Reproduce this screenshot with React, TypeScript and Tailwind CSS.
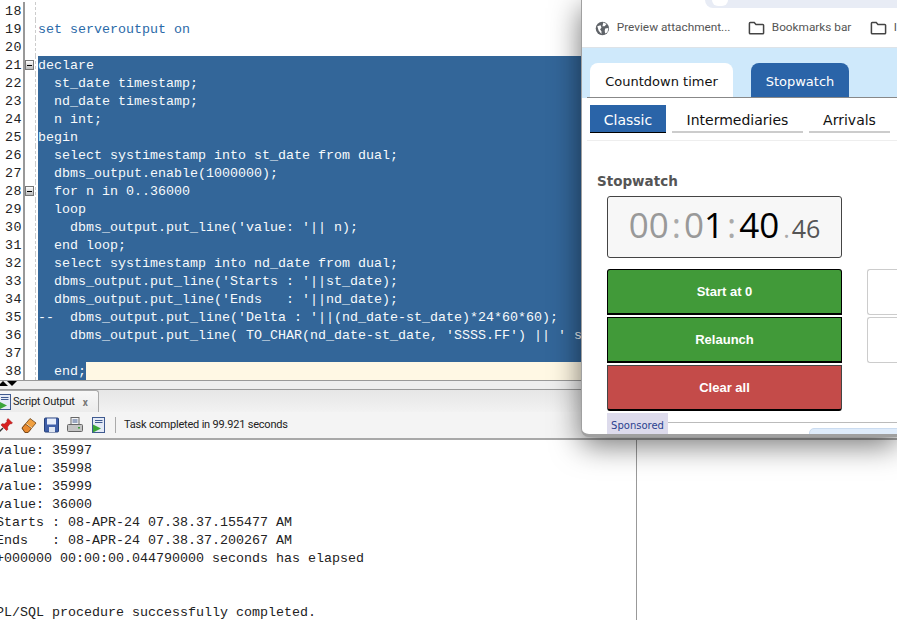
import React from 'react';

const mono = 'font-["Liberation_Mono",monospace]';

const editorLines: [number, string][] = [
  [18, ''],
  [19, 'set serveroutput on'],
  [20, ''],
  [21, 'declare'],
  [22, '  st_date timestamp;'],
  [23, '  nd_date timestamp;'],
  [24, '  n int;'],
  [25, 'begin'],
  [26, '  select systimestamp into st_date from dual;'],
  [27, '  dbms_output.enable(1000000);'],
  [28, '  for n in 0..36000'],
  [29, '  loop'],
  [30, "    dbms_output.put_line('value: '|| n);"],
  [31, '  end loop;'],
  [32, '  select systimestamp into nd_date from dual;'],
  [33, "  dbms_output.put_line('Starts : '||st_date);"],
  [34, "  dbms_output.put_line('Ends   : '||nd_date);"],
  [35, "--  dbms_output.put_line('Delta : '||(nd_date-st_date)*24*60*60);"],
  [36, "    dbms_output.put_line( TO_CHAR(nd_date-st_date, 'SSSS.FF') || ' s"],
  [37, ''],
  [38, '  end;'],
];

const outputLines = [
  'value: 35997',
  'value: 35998',
  'value: 35999',
  'value: 36000',
  'Starts : 08-APR-24 07.38.37.155477 AM',
  'Ends   : 08-APR-24 07.38.37.200267 AM',
  '+000000 00:00:00.044790000 seconds has elapsed',
  '',
  '',
  'PL/SQL procedure successfully completed.',
];

function FoldBox() {
  return (
    <div className="flex h-[10px] w-[9px] items-center justify-center border border-[#777] bg-gradient-to-b from-white to-[#bbb]">
      <div className="h-px w-[5px] bg-black" />
    </div>
  );
}

function EditorRow({ num, text }: { num: number; text: string }) {
  const selected = num >= 21;
  const last = num === 38;
  return (
    <div className="flex h-[18px]">
      <div className={`w-[23px] pl-[5px] pt-px text-[13.33px] leading-[17px] tracking-[0.6px] text-[#222] ${mono}`}>{num}</div>
      <div className="flex w-[12px] items-center justify-end border-l-2 border-[#999] pr-px">
        {(num === 21 || num === 28) && <FoldBox />}
      </div>
      <div className="w-[3px] border-l border-dashed border-[#ccc]" />
      <div className={`min-w-0 flex-1 overflow-hidden ${last ? 'bg-[#fff8e4]' : selected ? 'bg-[#336699]' : ''}`}>
        <div
          className={`h-[18px] whitespace-pre pt-px text-[13.33px] leading-[17px] ${mono} ${
            selected ? 'text-[#f7fafc]' : 'text-[#2a6aa8]'
          } ${last ? 'w-[48px] bg-[#336699]' : ''}`}
        >
          {text}
        </div>
      </div>
    </div>
  );
}

function Folder({ className }: { className: string }) {
  return (
    <svg viewBox="0 0 18 14" className={className} fill="none" stroke="#444" strokeWidth="1.6">
      <path d="M1.5 12.2V2.2c0-.5.4-.9.9-.9h4.2l1.8 2h7.2c.5 0 .9.4.9.9v8c0 .5-.4.9-.9.9H2.4c-.5 0-.9-.4-.9-.9z" />
    </svg>
  );
}

function Globe() {
  return (
    <svg viewBox="0 0 16 16" className="h-[15px] w-[15px]">
      <circle cx="8" cy="8" r="7.2" fill="#5f6368" />
      <path d="M2.5 5.5 6 4.5l1 2.5-1.5 2 1.5 2v3L4 10.5zM9 1.5l3.5 1.5-2 2.5H8zM11 8l3.5-.5-1 4.5-2.5 1.5-.5-3z" fill="#fff" />
    </svg>
  );
}

function RunDoc({ className }: { className: string }) {
  return (
    <svg viewBox="0 0 16 16" className={className}>
      <rect x="2.500" y=".5" width="12" height="15" fill="#e4eaf6" stroke="#3f5a90" />
      <path d="M5 3.500h7.500M5 5.500h7.500" stroke="#3f5a90" />
      <path d="M3 7.500l8 4-8 4z" fill="#3aa53a" />
    </svg>
  );
}

function ToolbarIcons() {
  return (
    <div className="-ml-[2px] flex items-center gap-[7px]">
      <svg viewBox="0 0 16 16" className="h-[16px] w-[16px]">
        <path d="M10 1.500l4.500 4.500-1.500 1-1-.3L9.500 10l.3 2.500-1.300 1L3 8l1-1.300 2.500.3L9 4.500l-.2-1.200z" fill="#d82020" stroke="#9a1010" strokeWidth=".5" />
        <path d="M5 11l-4 4" stroke="#333" strokeWidth="1.500" />
      </svg>
      <svg viewBox="0 0 16 16" className="h-[16px] w-[16px]">
        <path d="M1 11l8-9.500 6 4.500-8 9.500H4z" fill="#f0a040" stroke="#6a4015" strokeWidth=".8" />
        <path d="M5 7l6 4.500" stroke="#fff3dc" strokeWidth="1.200" />
        <path d="M1 11l3.500-4 6 4.500L7 15.500H4z" fill="#e88a30" stroke="#6a4015" strokeWidth=".8" />
      </svg>
      <svg viewBox="0 0 16 16" className="h-[16px] w-[16px]">
        <rect x=".5" y="1" width="14" height="14" rx="1" fill="#3f5fa8" stroke="#26407a" />
        <rect x="3" y="1.500" width="9" height="6" fill="#e8eefb" />
        <rect x="5" y="10" width="6" height="5" fill="#dfe6f2" />
      </svg>
      <svg viewBox="0 0 16 16" className="h-[16px] w-[16px]">
        <rect x="4" y=".5" width="8" height="7" fill="#f4f4f4" stroke="#666" />
        <path d="M5.500 3h5M5.500 5h5" stroke="#3f5a90" />
        <rect x=".5" y="7.500" width="15" height="7" rx="1" fill="#c4c4c4" stroke="#666" />
        <rect x="11" y="10" width="2" height="1.500" fill="#3b9a3b" />
      </svg>
      <RunDoc className="h-[16px] w-[16px]" />
    </div>
  );
}

function BrowserWindow() {
  return (
    <div className="absolute left-[581px] top-0 h-[437px] w-[316px] overflow-hidden rounded-bl-[8px] border-b-[3px] border-l border-[#a0a0a0] bg-white shadow-[0_8px_30px_rgba(0,0,0,0.55)]">
      <div className="relative h-[48px] border-b border-[#dde3e8] font-['Roboto',sans-serif] text-[11.8px] text-[#555]">
        <div className="absolute left-[123px] top-0 h-[8px] w-[200px] rounded-bl-[10px] bg-[#e8ecf5]">
          <div className="ml-[7px] h-[6px] w-[16px] rounded-b-full bg-white" />
        </div>
        <div className="flex h-full items-center pl-[13px] pt-[9px]">
          <Globe />
          <span className="ml-[7px] w-[131px] shrink-0 whitespace-nowrap">Preview attachment...</span>
          <Folder className="h-[14px] w-[17px] shrink-0" />
          <span className="ml-[7px] w-[98px] shrink-0 whitespace-nowrap">Bookmarks bar</span>
          <Folder className="h-[14px] w-[17px] shrink-0" />
          <span className="ml-[7px] whitespace-nowrap">I</span>
        </div>
      </div>
      <div className="h-[50px] bg-[#cfe9fb] font-['DejaVu_Sans',sans-serif] text-[13px]">
        <div className="ml-[5px] flex h-[50px] items-end gap-[18px] border-b border-[#888] pl-[3px]">
          <div className="flex h-[34px] w-[143px] shrink-0 items-center justify-center rounded-t-[8px] bg-white pt-[3px] text-[#111]">Countdown timer</div>
          <div className="flex h-[34px] w-[98px] shrink-0 items-center justify-center rounded-t-[8px] bg-[#2a64a8] pt-[3px] text-white">Stopwatch</div>
        </div>
      </div>
      <div className="ml-[5px] flex h-[43px] gap-[6px] border-b border-[#eee] pl-[3px] pt-[7px] font-['DejaVu_Sans',sans-serif] text-[14px] text-[#111]">
        <div className="flex h-[28px] w-[76px] shrink-0 items-center justify-center border-b border-black bg-[#2a64a8] pt-[4px] text-white">Classic</div>
        <div className="flex h-[28px] w-[131px] shrink-0 items-center justify-center border-b-2 border-[#ccc] pt-[5px]">Intermediaries</div>
        <div className="flex h-[28px] w-[81px] shrink-0 items-center justify-center border-b-2 border-[#ccc] pt-[5px]">Arrivals</div>
      </div>
      <div className="pl-[15px] pt-[31px] font-['DejaVu_Sans',sans-serif] text-[13.5px] font-bold leading-[18px] text-[#555]">Stopwatch</div>
      <div className="flex pl-[25px] pt-[6px]">
        <div className="w-[235px] shrink-0">
          <div className="flex h-[62px] items-baseline justify-center whitespace-pre rounded-[3px] border border-[#444] bg-[#f7f7f7] pt-[7px] font-['Open_Sans',sans-serif] text-[35px] leading-[42px] text-[#999]">
            <span>00</span>
            <span className="mx-[3px] text-[#aaa]">:</span>
            <span>0</span>
            <span className="text-black">1</span>
            <span className="mx-[3px] text-[#aaa]">:</span>
            <span className="text-black">40</span>
            <span className="ml-[4px] text-[25px] text-[#aaa]">.</span>
            <span className="ml-[2px] text-[25px] text-[#555]">46</span>
          </div>
          <div className="mt-[11px] flex flex-col gap-[2px] font-['Liberation_Sans',sans-serif] text-[13px] font-bold text-white">
            <div className="flex h-[46px] items-center justify-center rounded-t-[3px] border border-b-2 border-black bg-[#419a39] pt-px">Start at 0</div>
            <div className="flex h-[46px] items-center justify-center border border-b-2 border-black bg-[#419a39] pt-px">Relaunch</div>
            <div className="flex h-[46px] items-center justify-center rounded-b-[3px] border border-b-2 border-[#444] border-b-black bg-[#c44b49] pt-px">Clear all</div>
          </div>
        </div>
        <div className="ml-[25px] mt-[73px] flex w-[40px] shrink-0 flex-col gap-[2px]">
          <div className="h-[46px] rounded-l-[3px] border border-r-0 border-[#ccc]" />
          <div className="h-[46px] rounded-l-[3px] border border-r-0 border-[#ccc]" />
        </div>
      </div>
      <div className="relative flex h-[21px] pl-[25px]">
        <div className="z-10 mt-[2px] flex h-[21px] w-[61px] shrink-0 items-center justify-center bg-[#dddbec] pt-[3px] font-['DejaVu_Sans',sans-serif] text-[10px] text-[#2a3f8f]">
          Sponsored
        </div>
        <div className="mt-[11px] h-px flex-1 bg-[#bbb]" />
        <div className="absolute left-[227px] top-[17px] h-[8px] w-[100px] rounded-tl-[5px] border border-[#cbdcf0] bg-[#dfecfb]" />
      </div>
    </div>
  );
}

export default function App() {
  return (
    <div className="relative flex h-[620px] w-[897px] flex-col overflow-hidden bg-white">
      <div className="h-[380px] shrink-0 overflow-hidden pt-[2px]">
        {editorLines.map(([num, text]) => (
          <EditorRow key={num} num={num} text={text} />
        ))}
      </div>
      <div className="relative h-[10px] shrink-0 border-y border-[#999] bg-[#eee]">
        <div className="absolute -left-[2px] top-0 h-0 w-0 border-x-[5px] border-b-[5px] border-x-transparent border-b-black" />
        <div className="absolute left-[7px] top-0 h-0 w-0 border-x-[5px] border-t-[5px] border-x-transparent border-t-black" />
      </div>
      <div className="flex h-[22px] shrink-0 bg-gradient-to-b from-[#e6e6e6] to-[#f2f2f2]">
        <div className="flex h-[22px] w-[99px] shrink-0 items-center rounded-tr-[3px] border-r border-t border-[#aaa] bg-gradient-to-b from-[#f7f7f7] to-[#ececec] pt-px font-['Roboto',sans-serif] text-[11px] tracking-[-0.2px] text-[#222]">
          <RunDoc className="-ml-[4px] h-[16px] w-[16px] shrink-0" />
          <span className="ml-[1px] whitespace-nowrap">Script Output</span>
          <span className="ml-[8px] text-[10px] font-bold text-[#777]">x</span>
        </div>
      </div>
      <div className="flex h-[28px] shrink-0 items-center border-b-2 border-[#a8a8a8] bg-[#f4f4f4] font-['Roboto',sans-serif] text-[11px] tracking-[-0.2px] text-[#222]">
        <ToolbarIcons />
        <div className="ml-[9px] h-[16px] w-px bg-[#aaa]" />
        <span className="ml-[8px] whitespace-nowrap">Task completed in 99.921 seconds</span>
      </div>
      <div className="flex min-h-0 flex-1">
        <div className={`h-full w-[637px] overflow-hidden border-r border-[#999] pt-[2px] text-[13.33px] leading-[18px] text-[#222] ${mono}`}>
          {outputLines.map((line, i) => (
            <div key={i} className="h-[18px] whitespace-pre indent-[-4px]">
              {line}
            </div>
          ))}
        </div>
      </div>
      <BrowserWindow />
    </div>
  );
}
